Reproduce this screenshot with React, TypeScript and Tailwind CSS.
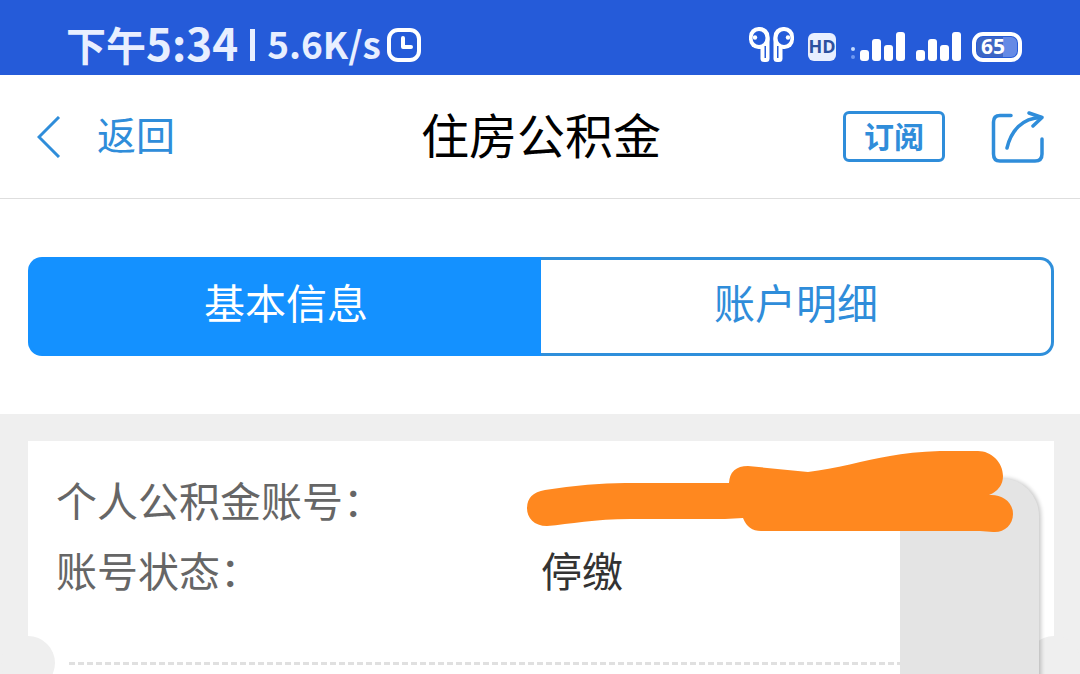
import { useState } from 'react';

const tabs = [
  { id: 'info', label: '基本信息' },
  { id: 'detail', label: '账户明细' },
];

function ClockIcon() {
  return (
    <svg width="34" height="34" viewBox="0 0 34 34" fill="none" stroke="currentColor" strokeWidth="4">
      <rect x="2" y="2" width="30" height="30" rx="9" />
      <path d="M16 10v9h8" strokeLinecap="round" strokeLinejoin="round" />
    </svg>
  );
}

function EarbudsIcon() {
  return (
    <svg width="45" height="36" viewBox="0 0 45 36" fill="currentColor">
      <rect x="0" y="0" width="20.500" height="22" rx="9.500" />
      <rect x="11.500" y="8" width="9" height="27" rx="3.500" />
      <rect x="24.500" y="0" width="20.500" height="22" rx="9.500" />
      <rect x="24.500" y="8" width="9" height="27" rx="3.500" />
      <g fill="#255bd9">
        <ellipse cx="10" cy="11" rx="6.500" ry="7" />
        <ellipse cx="35" cy="11" rx="6.500" ry="7" />
        <rect x="15.500" y="19" width="1.500" height="12" />
        <rect x="28" y="19" width="1.500" height="12" />
      </g>
      <circle cx="6" cy="10.500" r="2.200" />
      <circle cx="39" cy="10.500" r="2.200" />
    </svg>
  );
}

function SignalIcon() {
  return (
    <svg width="46" height="30" viewBox="0 0 46 30" fill="currentColor">
      <rect x="1" y="18" width="9" height="11" rx="3" />
      <rect x="13" y="7" width="9" height="22" rx="3" />
      <rect x="25" y="13" width="9" height="16" rx="3" />
      <rect x="37" y="0" width="9" height="29" rx="3" />
    </svg>
  );
}

function StatusBar() {
  return (
    <div className="flex h-[75px] shrink-0 items-center justify-between bg-[#255bd9] pt-[14px] pr-[58px] pl-[66px] text-[#e8efff]">
      <div className="flex items-center font-bold">
        <span className="pb-1 text-[40px] leading-[48px]">
          下午<span className="text-[44px]">5:34</span>
        </span>
        <span className="mx-3 h-8 w-[5px] bg-current" />
        <span className="pb-1 text-[37px] leading-[48px]">5.6K/s</span>
        <span className="ml-[6px] text-white">
          <ClockIcon />
        </span>
      </div>
      <div className="flex items-center text-white">
        <EarbudsIcon />
        <span className="mt-1 ml-[14px] flex h-7 w-7 items-center justify-center rounded-md bg-[#e8efff] font-['Open_Sans'] text-[18px] font-bold text-[#2c519f]">
          HD
        </span>
        <span className="mr-1 ml-[15px] mt-4 flex flex-col gap-1">
          <i className="h-1 w-1 rounded-full bg-[#c5dcff]" />
          <i className="h-1 w-1 rounded-full bg-[#6f98f0]" />
        </span>
        <span className="mt-1">
          <SignalIcon />
        </span>
        <span className="mt-1 ml-[10px]">
          <SignalIcon />
        </span>
        <span className="mt-1 ml-[11px] flex h-[30px] w-[50px] items-center rounded-[11px] border-4 border-white bg-[#255bd9] p-px">
          <span className="flex h-full w-full items-center rounded-md bg-[linear-gradient(90deg,#3e66c4_65%,#658ae5_65%)] pl-1 font-['Open_Sans'] text-[21px] font-bold">
            65
          </span>
        </span>
      </div>
    </div>
  );
}

function Header() {
  return (
    <header className="grid h-[124px] shrink-0 grid-cols-[1fr_auto_1fr] items-center border-b border-[#dedede] bg-white pr-[35px] pl-[37px] text-[#2f8dda]">
      <button className="flex items-center gap-9 justify-self-start text-[39px] leading-[56px]">
        <svg width="24" height="42" viewBox="0 0 24 42" fill="none" stroke="currentColor" strokeWidth="3">
          <path d="M22 1L2 21L22 41" />
        </svg>
        <span className="pb-2">返回</span>
      </button>
      <h1 className="pb-2 text-[48px] leading-[70px] text-black">住房公积金</h1>
      <div className="flex items-center gap-[46px] justify-self-end">
        <button className="flex h-[51px] w-[102px] items-center justify-center rounded-md border-[3px] border-current pb-1 text-[30px] leading-none font-bold">
          订阅
        </button>
        <button aria-label="分享">
          <svg width="54" height="52" viewBox="0 0 54 52" fill="none" stroke="currentColor" strokeWidth="3.500" strokeLinecap="round" strokeLinejoin="round">
            <path d="M20 4.500H9Q2.500 4.500 2.500 11V43Q2.500 50 9 50H44Q51 50 51 43V28" />
            <path d="M16 37C20 20 31 7 50 6.500" />
            <path d="M38 2L51 6.500L42 15" />
          </svg>
        </button>
      </div>
    </header>
  );
}

function Scribble() {
  return (
    <svg className="absolute top-2 left-[498px]" width="490" height="86" viewBox="526 449 490 86" fill="#ff881f">
      <path d="M545 490Q590 483 625 483H729Q730 466 748 466L808 472C835 469 865 460 890 456Q910 452 940 451H978C991 451 1003 462 1003 476Q1003 489 989 495C1001 494 1013 501 1013 514C1013 525 1004 533 993 532L980 531H761Q748 531 743 518L725 519H630C595 519 570 524 547 526C534 526 527 518 527 508Q527 493 545 490Z" />
    </svg>
  );
}

export default function App() {
  const [active, setActive] = useState('info');

  return (
    <div lang="zh-CN" className="flex h-screen flex-col overflow-hidden bg-[#efefef] font-['Noto_Sans_CJK_SC',sans-serif]">
      <StatusBar />
      <Header />

      <nav className="shrink-0 bg-white py-[58px] pr-[26px] pl-7">
        <div className="grid h-[99px] grid-cols-2">
          {tabs.map((tab) => (
            <button
              key={tab.id}
              onClick={() => setActive(tab.id)}
              className={`border-y-[3px] pb-3 text-[41px] leading-[60px] first:rounded-l-[14px] first:border-l-[3px] last:rounded-r-[14px] last:border-r-[3px] ${
                active === tab.id ? 'border-[#1491ff] bg-[#1491ff] text-white' : 'border-[#2f8fdb] bg-white text-[#2f8dda]'
              }`}
            >
              {tab.label}
            </button>
          ))}
        </div>
      </nav>

      <main className="shrink-0 pt-[27px] pr-[26px] pl-7">
        <section className="relative bg-white pt-[23px]">
          <dl className="px-7 text-[41px] leading-[70px] text-[#666]">
            <div className="grid grid-cols-2">
              <dt>个人公积金账号：</dt>
              <dd />
            </div>
            <div className="grid grid-cols-2">
              <dt>账号状态：</dt>
              <dd className="text-[#333]">停缴</dd>
            </div>
          </dl>

          {/* ticket notches and perforated line */}
          <div className="relative mt-8 flex h-[54px] items-center px-[41px]">
            <span className="absolute top-0 -left-[27px] h-[54px] w-[54px] rounded-full bg-[#efefef]" />
            <span className="absolute top-0 -right-[27px] h-[54px] w-[54px] rounded-full bg-[#efefef]" />
            <span className="h-[3px] w-full bg-[repeating-linear-gradient(90deg,#e0e0e0_0_6px,transparent_6px_9px)]" />
          </div>

          <div className="absolute top-[37px] right-[15px] bottom-0 w-[139px] rounded-tr-[38px] bg-[#e4e4e4] shadow-[2px_0_4px_rgba(0,0,0,0.22)] [clip-path:inset(-8px_-12px_0_0)]" />
          <Scribble />
        </section>
      </main>
    </div>
  );
}
